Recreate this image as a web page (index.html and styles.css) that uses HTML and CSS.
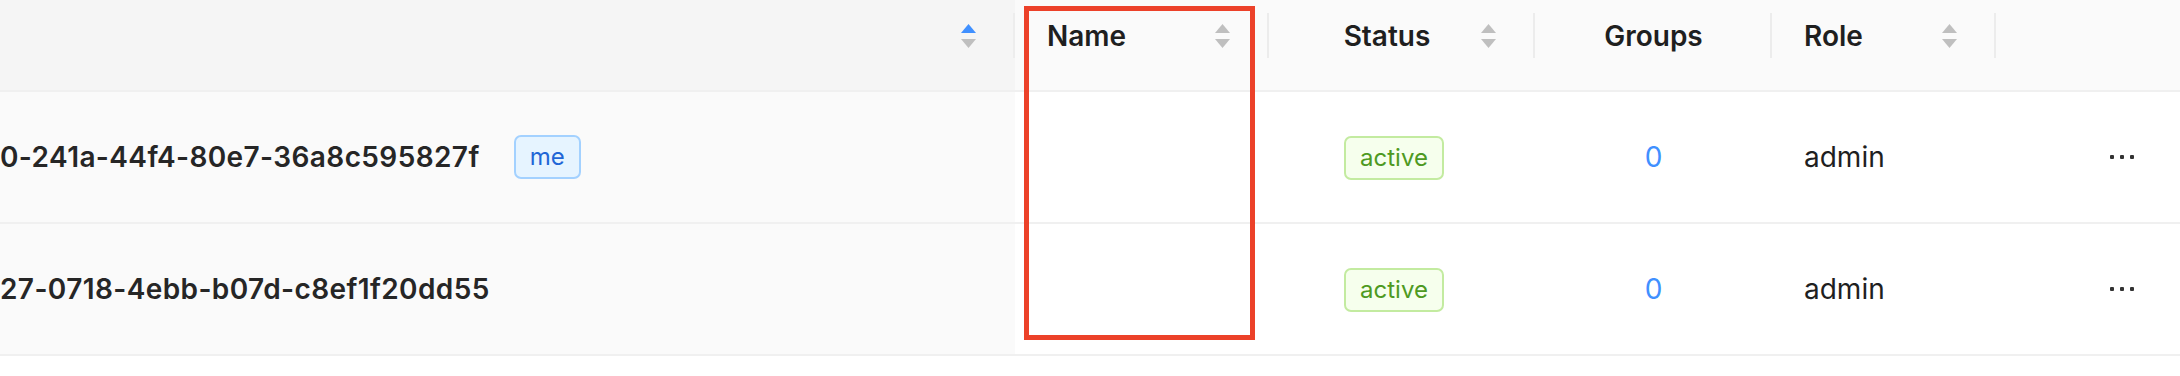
FILE: index.html
```html
<!DOCTYPE html>
<html lang="en">
<head>
<meta charset="utf-8">
<title>Users</title>
<link rel="stylesheet" href="styles.css">
</head>
<body>
<div class="frame">
  <table class="users">
    <colgroup>
      <col class="c-id">
      <col class="c-name">
      <col class="c-status">
      <col class="c-groups">
      <col class="c-role">
      <col class="c-actions">
    </colgroup>
    <thead>
      <tr>
        <th class="sorted">
          <div class="sorters">
            <span class="title"></span>
            <span class="sorter">
              <svg class="caret up active" viewBox="0 0 15 9"><polygon points="0,9 7.5,0 15,9"/></svg>
              <svg class="caret down" viewBox="0 0 15 9"><polygon points="0,0 15,0 7.5,9"/></svg>
            </span>
          </div>
        </th>
        <th>
          <div class="sorters">
            <span class="title">Name</span>
            <span class="sorter">
              <svg class="caret up" viewBox="0 0 15 9"><polygon points="0,9 7.5,0 15,9"/></svg>
              <svg class="caret down" viewBox="0 0 15 9"><polygon points="0,0 15,0 7.5,9"/></svg>
            </span>
          </div>
        </th>
        <th class="center">
          <div class="sorters">
            <span class="title">Status</span>
            <span class="sorter">
              <svg class="caret up" viewBox="0 0 15 9"><polygon points="0,9 7.5,0 15,9"/></svg>
              <svg class="caret down" viewBox="0 0 15 9"><polygon points="0,0 15,0 7.5,9"/></svg>
            </span>
          </div>
        </th>
        <th class="center"><span class="title">Groups</span></th>
        <th>
          <div class="sorters">
            <span class="title">Role</span>
            <span class="sorter">
              <svg class="caret up" viewBox="0 0 15 9"><polygon points="0,9 7.5,0 15,9"/></svg>
              <svg class="caret down" viewBox="0 0 15 9"><polygon points="0,0 15,0 7.5,9"/></svg>
            </span>
          </div>
        </th>
        <th class="last"></th>
      </tr>
    </thead>
    <tbody>
      <tr>
        <td class="sorted id-cell">
          <div class="id-wrap">
            <span class="uuid">0-241a-44f4-80e7-36a8c595827f</span>
            <span class="tag tag-blue">me</span>
          </div>
        </td>
        <td></td>
        <td class="center"><span class="tag tag-green">active</span></td>
        <td class="center"><a class="link">0</a></td>
        <td>admin</td>
        <td class="actions">
          <svg class="more" viewBox="0 0 24 4"><rect x="0" y="0" width="4" height="4" rx="1"/><rect x="10" y="0" width="4" height="4" rx="1"/><rect x="20" y="0" width="4" height="4" rx="1"/></svg>
        </td>
      </tr>
      <tr>
        <td class="sorted id-cell">
          <div class="id-wrap">
            <span class="uuid">27-0718-4ebb-b07d-c8ef1f20dd55</span>
          </div>
        </td>
        <td></td>
        <td class="center"><span class="tag tag-green">active</span></td>
        <td class="center"><a class="link">0</a></td>
        <td>admin</td>
        <td class="actions">
          <svg class="more" viewBox="0 0 24 4"><rect x="0" y="0" width="4" height="4" rx="1"/><rect x="10" y="0" width="4" height="4" rx="1"/><rect x="20" y="0" width="4" height="4" rx="1"/></svg>
        </td>
      </tr>
    </tbody>
  </table>
  <div class="highlight"></div>
</div>
</body>
</html>
```

FILE: styles.css
```css
html, body {
  margin: 0;
  padding: 0;
  background: #ffffff;
}

body {
  font-family: "Inter", "Liberation Sans", sans-serif;
  font-size: 28px;
  color: #1f1f1f;
}

.frame {
  position: relative;
  width: 2180px;
  height: 376px;
  overflow: hidden;
}

.users {
  width: 2180px;
  table-layout: fixed;
  border-collapse: separate;
  border-spacing: 0;
}

.c-id { width: 1015px; }
.c-name { width: 254px; }
.c-status { width: 266px; }
.c-groups { width: 237px; }
.c-role { width: 224px; }
.c-actions { width: 184px; }

th {
  position: relative;
  background: #fafafa;
  font-weight: 600;
  text-align: left;
  padding: 14px 32px 32px 32px;
  line-height: 44px;
  height: 44px;
  border-bottom: 2px solid #f0f0f0;
}

th.sorted {
  background: #f5f5f5;
}

th:not(.last)::before {
  content: "";
  position: absolute;
  right: 0;
  top: 13px;
  width: 2px;
  height: 45px;
  background: #ececec;
}

th.sorted::before {
  background: #ededed;
}

.center {
  text-align: center;
}

.sorters {
  display: flex;
  align-items: center;
}

.sorters .title {
  flex: 1;
}

.sorter {
  width: 22px;
  display: flex;
  flex-direction: column;
  align-items: center;
  gap: 6px;
  margin-left: 4px;
  margin-right: 4px;
}

.caret {
  display: block;
  width: 15px;
  height: 9px;
  fill: #bfbfbf;
}

.caret.active {
  fill: #4090ff;
}

td {
  height: 130px;
  padding: 0 32px;
  border-bottom: 2px solid #f0f0f0;
  vertical-align: middle;
  line-height: 44px;
  background: #ffffff;
}

td.sorted {
  background: #fafafa;
}

td.id-cell {
  padding-left: 0;
}

.id-wrap {
  display: flex;
  align-items: center;
  gap: 34px;
}

.uuid {
  font-weight: 600;
  color: #262626;
  white-space: nowrap;
  letter-spacing: 0.4px;
}

.tag {
  display: inline-block;
  box-sizing: border-box;
  height: 44px;
  line-height: 40px;
  padding: 0 14px;
  font-size: 24px;
  border-radius: 7px;
  border: 2px solid;
}

.tag-blue {
  color: #1f66d6;
  background: #e6f4ff;
  border-color: #a3d1ff;
}

.tag-green {
  color: #4e9a22;
  background: #f6ffed;
  border-color: #c3eba0;
  margin-right: 16px;
}

.link {
  color: #4090ff;
  cursor: pointer;
}

.actions {
  padding-left: 114px;
}

.more {
  display: block;
  width: 24px;
  height: 4px;
  fill: #333333;
}

.highlight {
  position: absolute;
  left: 1024px;
  top: 6px;
  width: 231px;
  height: 334px;
  box-sizing: border-box;
  border: 5px solid #ec4129;
}
```
